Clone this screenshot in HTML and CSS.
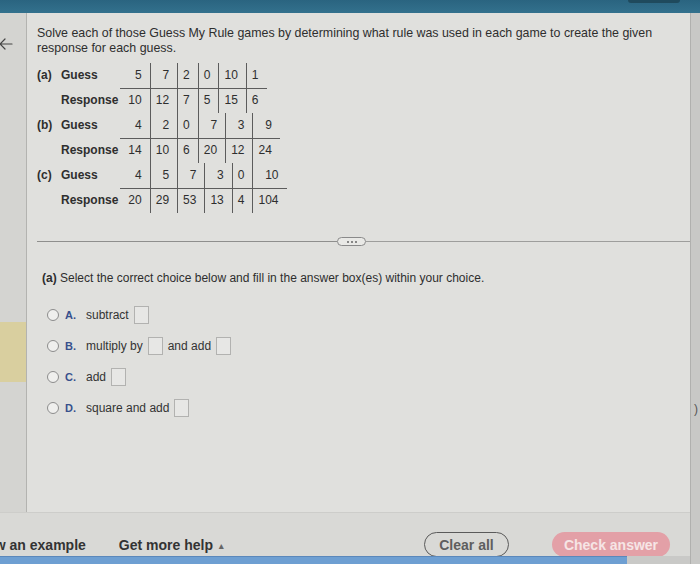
FILE: index.html
```html
<!DOCTYPE html>
<html>
<head>
<meta charset="utf-8">
<link rel="stylesheet" href="styles.css">
</head>
<body>
<div class="topbar"><div class="topbar-btn"></div></div>
<div class="below">
  <div class="maincol">
    <div class="workarea">
      <div class="leftstrip">
        <svg class="back" width="14" height="14" viewBox="0 0 14 14">
          <path d="M1 7 H13 M1 7 L6 2 M1 7 L6 12" stroke="#444" stroke-width="1.2" fill="none" stroke-linecap="round"/>
        </svg>
        <div class="focusmark"></div>
      </div>
      <div class="panel">
        <p class="question">Solve each of those Guess My Rule games by determining what rule was used in each game to create the given response for each guess.</p>

        <table class="rule">
          <tr class="guess"><td class="lab-part">(a)</td><td class="lab-name">Guess</td><td class="n first">5</td><td class="n">7</td><td class="n">2</td><td class="n">0</td><td class="n">10</td><td class="n">1</td></tr>
          <tr class="resp"><td class="lab-part"></td><td class="lab-name">Response</td><td class="n first">10</td><td class="n">12</td><td class="n">7</td><td class="n">5</td><td class="n">15</td><td class="n">6</td></tr>
        </table>
        <table class="rule">
          <tr class="guess"><td class="lab-part">(b)</td><td class="lab-name">Guess</td><td class="n first">4</td><td class="n">2</td><td class="n">0</td><td class="n">7</td><td class="n">3</td><td class="n">9</td></tr>
          <tr class="resp"><td class="lab-part"></td><td class="lab-name">Response</td><td class="n first">14</td><td class="n">10</td><td class="n">6</td><td class="n">20</td><td class="n">12</td><td class="n">24</td></tr>
        </table>
        <table class="rule">
          <tr class="guess"><td class="lab-part">(c)</td><td class="lab-name">Guess</td><td class="n first">4</td><td class="n">5</td><td class="n">7</td><td class="n">3</td><td class="n">0</td><td class="n">10</td></tr>
          <tr class="resp"><td class="lab-part"></td><td class="lab-name">Response</td><td class="n first">20</td><td class="n">29</td><td class="n">53</td><td class="n">13</td><td class="n">4</td><td class="n">104</td></tr>
        </table>

        <div class="sep">
          <span class="sep-line sep-left"></span>
          <span class="pill"><i></i><i></i><i></i></span>
          <span class="sep-line sep-right"></span>
        </div>

        <p class="prompt"><b>(a)</b> Select the correct choice below and fill in the answer box(es) within your choice.</p>

        <ul class="choices">
          <li><span class="radio"></span><span class="letter">A.</span><span class="txt">subtract</span><span class="box"></span></li>
          <li><span class="radio"></span><span class="letter">B.</span><span class="txt">multiply by</span><span class="box"></span><span class="txt">and add</span><span class="box"></span></li>
          <li><span class="radio"></span><span class="letter">C.</span><span class="txt">add</span><span class="box"></span></li>
          <li><span class="radio"></span><span class="letter">D.</span><span class="txt">square and add</span><span class="box"></span></li>
        </ul>
      </div>
    </div>
    <div class="footer">
      <span class="flink example">View an example</span>
      <span class="flink help">Get more help <span class="tri">&#9652;</span></span>
      <span class="btn clear">Clear all</span>
      <span class="btn check">Check answer</span>
    </div>
    <div class="taskbar"><div class="taskbar-blue"></div></div>
  </div>
  <div class="rightstrip"><span class="bracket">)</span></div>
</div>
</body>
</html>
```

FILE: styles.css
```css
html, body {
  margin: 0;
  padding: 0;
}
body {
  width: 700px;
  height: 564px;
  overflow: hidden;
  background: #d9d9d6;
  font-family: "Liberation Sans", Arial, sans-serif;
  color: #2e2e2e;
}
.topbar {
  height: 13px;
  background: linear-gradient(180deg, #2a6480 0%, #33718d 100%);
  display: flex;
  justify-content: flex-end;
}
.topbar-btn {
  width: 52px;
  height: 3px;
  margin-right: 20px;
  background: #1f4a5d;
  border-radius: 0 0 6px 6px;
}
.below {
  display: flex;
  height: 551px;
}
.maincol {
  flex: 1;
  display: flex;
  flex-direction: column;
  min-width: 0;
}
.workarea {
  height: 499px;
  display: flex;
  background: #e0e0dd;
}
.leftstrip {
  width: 26px;
  flex: none;
  background: #d4d4d1;
  border-right: 1px solid #b3b3b0;
  display: flex;
  flex-direction: column;
}
.back {
  display: block;
  margin-top: 24px;
  margin-left: -1px;
}
.focusmark {
  margin-top: 271px;
  height: 60px;
  background: #d9cf9f;
}
.panel {
  flex: 1;
  padding-left: 10px;
  min-width: 0;
}
.question {
  margin: 0;
  padding-top: 13px;
  max-width: 636px;
  font-size: 12.4px;
  line-height: 15px;
  margin-bottom: 7px;
}
.rule {
  border-collapse: collapse;
  border-spacing: 0;
  font-size: 12px;
}
.rule td {
  height: 25px;
  padding: 0;
  line-height: 15px;
  box-sizing: border-box;
  vertical-align: middle;
}
.lab-part {
  width: 24px;
  font-weight: bold;
}
.lab-name {
  font-weight: bold;
  padding-right: 2px !important;
  text-align: left;
}
.rule td.n {
  text-align: right;
  padding: 0 8px 0 5px;
  border-left: 1px solid #5c5c5c;
}
.rule td.n.first {
  border-left: none;
  padding-left: 8px;
}
.guess td.n {
  border-bottom: 1px solid #5c5c5c;
}
.sep {
  margin-top: 24px;
  height: 9px;
  display: flex;
  align-items: center;
}
.sep-line {
  height: 1px;
  background: #9e9e9c;
}
.sep-left {
  width: 300px;
  background: #8f8f8d;
}
.sep-right {
  flex: 1;
}
.pill {
  width: 29px;
  height: 9px;
  box-sizing: border-box;
  border: 1px solid #8a8a8a;
  border-radius: 5px;
  background: #e9e9e6;
  display: flex;
  align-items: center;
  justify-content: center;
  gap: 2px;
}
.pill i {
  width: 2px;
  height: 2px;
  background: #666;
  border-radius: 1px;
}
.prompt {
  margin: 25px 0 0 0;
  padding-left: 5px;
  font-size: 12px;
  line-height: 15px;
}
.choices {
  list-style: none;
  margin: 13px 0 0 0;
  padding: 0 0 0 10px;
}
.choices li {
  height: 31px;
  display: flex;
  align-items: center;
  font-size: 12px;
}
.radio {
  width: 12px;
  height: 12px;
  box-sizing: border-box;
  border: 1px solid #8c8c8c;
  border-radius: 50%;
  background: #efefed;
  margin-right: 6px;
  flex: none;
}
.letter {
  width: 21px;
  font-weight: bold;
  font-size: 11px;
  color: #37508c;
}
.txt {
  color: #333;
}
.box {
  width: 15px;
  height: 18px;
  box-sizing: border-box;
  border: 1px solid #b2b2b0;
  background: #e7e7e5;
  margin: 0 5px 0 5px;
  flex: none;
}
.footer {
  height: 44px;
  box-sizing: border-box;
  padding-top: 20px;
  display: flex;
  align-items: center;
  background: #d9d9d6;
  border-top: 1px solid #cdcdca;
}
.flink {
  font-size: 14px;
  font-weight: bold;
  color: #333;
  white-space: nowrap;
}
.example {
  margin-left: -26px;
}
.help {
  margin-left: 33px;
}
.tri {
  font-size: 9px;
  color: #666;
  margin-left: 2px;
  vertical-align: 1px;
}
.btn {
  height: 25px;
  box-sizing: border-box;
  border-radius: 13px;
  font-size: 14px;
  font-weight: bold;
  display: flex;
  align-items: center;
  justify-content: center;
  flex: none;
}
.clear {
  margin-left: auto;
  width: 85px;
  border: 1.5px solid #5a5a5a;
  color: #5e5e5e;
}
.check {
  margin-left: 43px;
  margin-right: 20px;
  width: 118px;
  background: #e3a0a7;
  color: #f6e5e5;
}
.taskbar {
  height: 8px;
  display: flex;
  background: #c9c9c7;
}
.taskbar-blue {
  width: 627px;
  background: #6e9fd2;
  border-top: 1px solid #5b88bb;
  box-sizing: border-box;
}
.rightstrip {
  width: 10px;
  flex: none;
  background: #c8c8c6;
  border-left: 1px solid #b0b0ae;
  box-sizing: border-box;
  padding-top: 386px;
  padding-left: 3px;
}
.bracket {
  font-size: 12px;
  color: #555;
  line-height: 14px;
}
```
